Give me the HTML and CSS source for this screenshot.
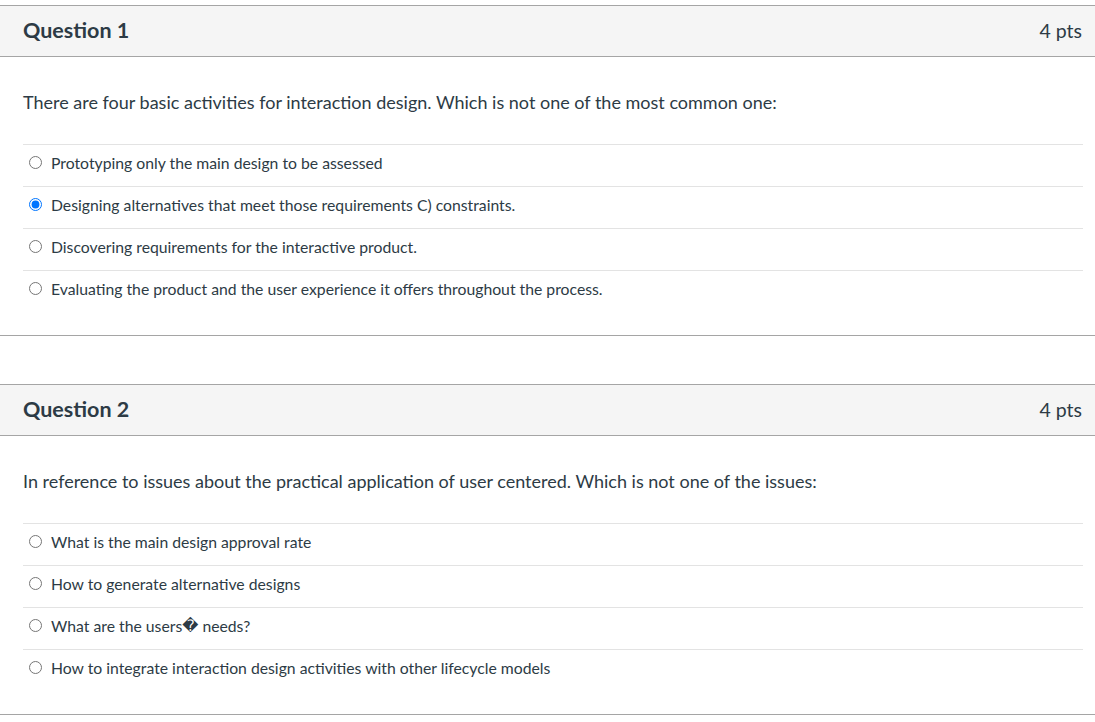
FILE: index.html
```html
<!DOCTYPE html>
<html lang="en">
<head>
    <meta charset="UTF-8">
    <meta name="viewport" content="width=device-width, initial-scale=1.0">
    <title>Quiz</title>
    <link rel="stylesheet" href="styles.css">
</head>
<body>

    <!-- Question 1 -->
    <div class="question">
        <div class="question-header">
            <h2>Question 1</h2>
            <span class="points">4 pts</span>
        </div>
        <div class="question-body">
            <p class="question-text">There are four basic activities for interaction design. Which is not one of the most common one:</p>
            <div class="answers">
                <label class="answer"><input type="radio" name="q1"> Prototyping only the main design to be assessed</label>
                <label class="answer"><input type="radio" name="q1" checked> Designing alternatives that meet those requirements C) constraints.</label>
                <label class="answer"><input type="radio" name="q1"> Discovering requirements for the interactive product.</label>
                <label class="answer"><input type="radio" name="q1"> Evaluating the product and the user experience it offers throughout the process.</label>
            </div>
        </div>
    </div>

    <!-- Question 2 -->
    <div class="question">
        <div class="question-header">
            <h2>Question 2</h2>
            <span class="points">4 pts</span>
        </div>
        <div class="question-body">
            <p class="question-text">In reference to issues about the practical application of user centered. Which is not one of the issues:</p>
            <div class="answers">
                <label class="answer"><input type="radio" name="q2"> What is the main design approval rate</label>
                <label class="answer"><input type="radio" name="q2"> How to generate alternative designs</label>
                <label class="answer"><input type="radio" name="q2"> What are the users<span class="bad-char">&#xFFFD;</span> needs?</label>
                <label class="answer"><input type="radio" name="q2"> How to integrate interaction design activities with other lifecycle models</label>
            </div>
        </div>
    </div>

</body>
</html>
```

FILE: styles.css
```css
body {
    font-family: 'Lato', sans-serif;
    color: #2d3b45;
    background-color: #fff;
    margin: 0;
    padding: 5px 0 0 0;
}

/* Question box */
.question {
    border-top: 1px solid #a5a5a5;
    border-bottom: 1px solid #a5a5a5;
    margin-bottom: 48px;
}
.question-header {
    background-color: #f5f5f5;
    border-bottom: 1px solid #a5a5a5;
    padding: 0 13px 2px 23px;
    box-sizing: border-box;
    height: 51px;
    display: flex;
    align-items: center;
    justify-content: space-between;
}
.question-header h2 {
    margin: 0;
    font-size: 21.5px;
    font-weight: bold;
}
.points {
    font-size: 19.5px;
}

/* Body */
.question-body {
    padding: 33px 12px 23px 23px;
}
.question-text {
    margin: 0 0 30px 0;
    font-size: 18px;
    line-height: 24px;
}
.answer {
    display: flex;
    align-items: center;
    padding-bottom: 6px;
    box-sizing: border-box;
    height: 42px;
    border-top: 1px solid #e3e3e3;
    font-size: 15.75px;
    cursor: pointer;
}
.answer input {
    margin: 0 9px 0 6px;
}
.bad-char {
    font-family: 'DejaVu Sans', sans-serif;
    margin-right: 4px;
}
```
